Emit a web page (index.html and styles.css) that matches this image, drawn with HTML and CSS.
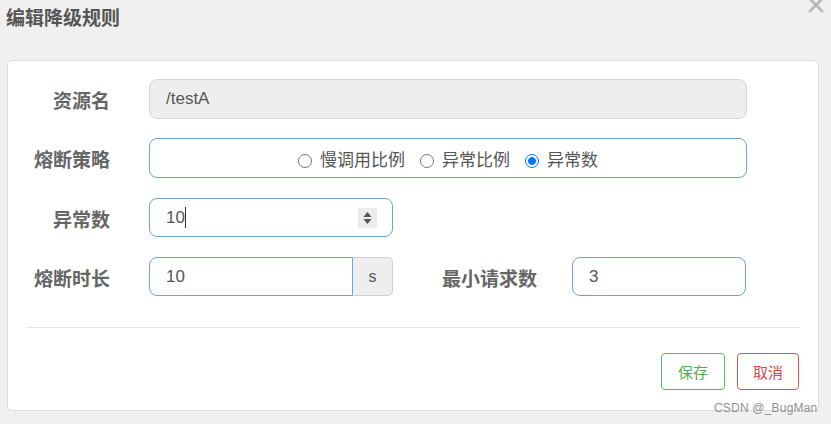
FILE: index.html
```html
<!DOCTYPE html>
<html lang="zh-CN">
<head>
<meta charset="utf-8">
<title>编辑降级规则</title>
<link rel="stylesheet" href="styles.css">
</head>
<body>
<div class="modal">
  <div class="header">
    <h3 class="title">编辑降级规则</h3>
    <span class="close" aria-label="close">
      <svg width="16" height="16" viewBox="0 0 16 16"><path d="M2 2 L14 14 M14 2 L2 14" stroke="#b4b4b4" stroke-width="2.6" stroke-linecap="round"/></svg>
    </span>
  </div>
  <div class="card">
    <div class="form">
      <div class="row">
        <div class="label">资源名</div>
        <div class="field field-wide field-disabled"><span class="value">/testA</span></div>
      </div>
      <div class="row">
        <div class="label">熔断策略</div>
        <div class="field field-wide field-active radios">
          <span class="radio"><span class="dot"></span>慢调用比例</span>
          <span class="radio"><span class="dot"></span>异常比例</span>
          <span class="radio checked"><span class="dot"></span>异常数</span>
        </div>
      </div>
      <div class="row row-low">
        <div class="label">异常数</div>
        <div class="field field-mid field-active">
          <span class="value">10</span><span class="caret"></span>
          <span class="spinner">
            <svg width="9" height="14" viewBox="0 0 9 14"><path d="M4.5 1 L8.5 6 L0.5 6 Z M0.5 8 L8.5 8 L4.5 13 Z" fill="#555"/></svg>
          </span>
        </div>
      </div>
      <div class="row row-low">
        <div class="label">熔断时长</div>
        <div class="group">
          <div class="field field-group field-active"><span class="value">10</span></div>
          <div class="addon">s</div>
        </div>
        <div class="label label-inline">最小请求数</div>
        <div class="field field-small field-active"><span class="value">3</span></div>
      </div>
    </div>
    <div class="divider"></div>
    <div class="footer">
      <button class="btn btn-save">保存</button>
      <button class="btn btn-cancel">取消</button>
    </div>
  </div>
  <div class="watermark">CSDN @_BugMan</div>
</div>
</body>
</html>
```
FILE: styles.css
```css
* { box-sizing: border-box; }
html, body { margin: 0; padding: 0; }
body {
  background: #f0f0f0;
  font-family: "Liberation Sans", "Noto Sans CJK SC", sans-serif;
  width: 831px;
  height: 424px;
  overflow: hidden;
}
.modal { position: relative; width: 831px; height: 424px; }
.header { height: 60px; padding-left: 6px; position: relative; }
.title {
  margin: 0;
  padding-top: 8px;
  font-size: 19px;
  line-height: 22px;
  font-weight: bold;
  color: #555;
}
.close { position: absolute; left: 808px; top: -3px; }
.card {
  margin-left: 7px;
  width: 812px;
  height: 351px;
  background: #fff;
  border: 1px solid #dcdcdc;
  border-radius: 4px;
  padding: 18px 18px 0;
}
.form { display: flex; flex-direction: column; gap: 19px; }
.row { display: flex; align-items: center; height: 40px; }
.row-low { margin-top: 1px; height: 39px; }
.row-low .field, .row-low .group, .row-low .addon { height: 39px; }
.label {
  width: 84px;
  margin-right: 39px;
  text-align: right;
  font-size: 19px;
  line-height: 24px;
  font-weight: bold;
  color: #666;
  padding-top: 6px;
}
.label-inline { width: auto; margin-left: 49px; margin-right: 35px; }
.field {
  height: 40px;
  border: 1px solid #6fa1d6;
  border-radius: 8px;
  background: #fff;
  display: flex;
  align-items: center;
  padding-left: 16px;
  font-size: 17px;
  color: #555;
}
.field-wide { width: 598px; }
.field-mid { width: 244px; padding-right: 15px; }
.field-small { width: 174px; }
.field-disabled { background: #eee; border-color: #d6d6d6; }
.value { line-height: 20px; }
.caret { width: 1px; height: 21px; background: #333; }
.spinner {
  margin-left: auto;
  width: 19px;
  height: 20px;
  background: #ececec;
  display: flex;
  align-items: center;
  justify-content: center;
}
.group { display: flex; height: 40px; }
.field-group { width: 204px; border-radius: 8px 0 0 8px; }
.addon {
  width: 40px;
  height: 40px;
  background: #eee;
  border: 1px solid #d0d0d0;
  border-left: none;
  border-radius: 0 5px 5px 0;
  display: flex;
  align-items: center;
  justify-content: center;
  font-size: 16px;
  color: #555;
}
.radios { justify-content: center; padding-left: 0; padding-top: 5px; gap: 15px; }
.radio {
  display: flex;
  align-items: center;
  gap: 8px;
  font-size: 17px;
  line-height: 22px;
  color: #555;
}
.dot {
  width: 14px;
  height: 14px;
  border: 1px solid #767676;
  border-radius: 50%;
  background: #fff;
}
.radio.checked .dot {
  border: 1.5px solid #0075ff;
  background: radial-gradient(circle, #0075ff 0 3.6px, #fff 4.2px);
}
.divider { height: 1px; background: #e6e6e6; margin-top: 31px; }
.footer { display: flex; justify-content: flex-end; gap: 12px; margin-top: 25px; padding-right: 1px; }
.btn {
  height: 37px;
  padding: 0 16px;
  background: #fff;
  border: 1px solid;
  border-radius: 4px;
  font-family: "Liberation Sans", "Noto Sans CJK SC", sans-serif;
  font-size: 15px;
}
.btn-save { border-color: #5cb85c; color: #4cae4c; }
.btn-cancel { border-color: #d9534f; color: #d9434b; padding: 0 15px; }
.watermark {
  position: absolute;
  left: 714px;
  top: 401px;
  font-size: 12px;
  line-height: 14px;
  color: #8f8f8f;
  letter-spacing: 0.2px;
}
```
